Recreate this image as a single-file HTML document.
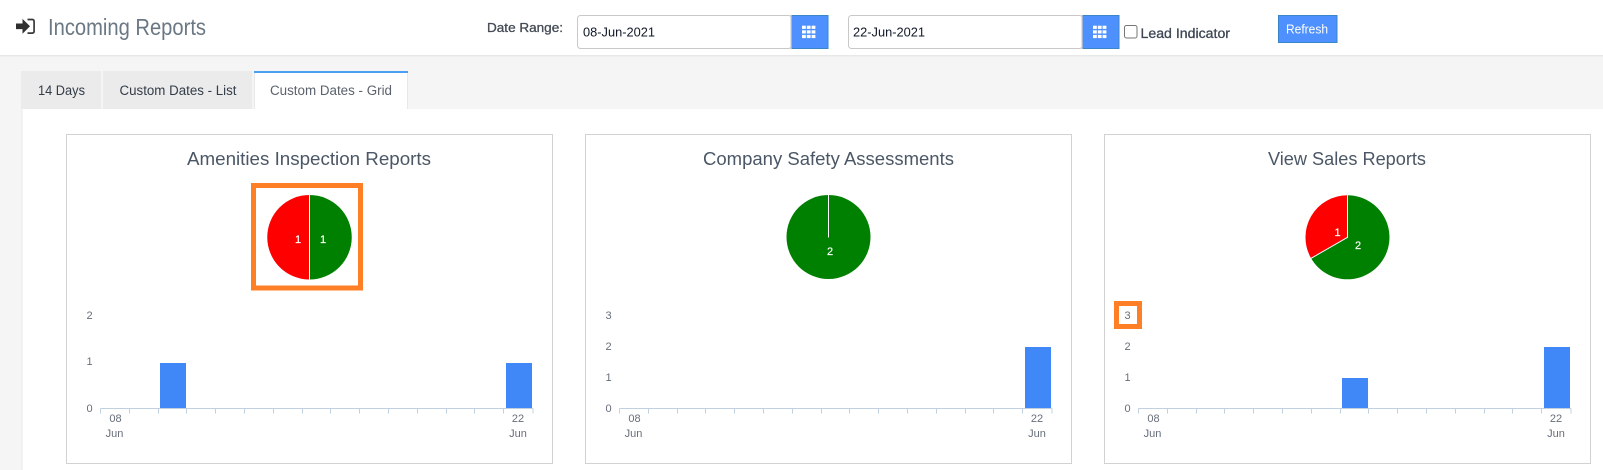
<!DOCTYPE html>
<html><head><meta charset="utf-8"><style>
html,body{margin:0;padding:0;background:#fff;width:1603px;height:470px;overflow:hidden}
svg{display:block}
text{font-family:"Liberation Sans",sans-serif}
</style></head><body>
<svg width="1603" height="470" viewBox="0 0 1603 470" xmlns="http://www.w3.org/2000/svg">
<defs>
<g id="axis" fill="none" stroke="#c0d0e0">
<path d="M100.5 408.5H533M100.5 408.5v5M129.5 408.5v5M158.5 408.5v5M186.5 408.5v5M215.5 408.5v5M244.5 408.5v5M273.5 408.5v5M302.5 408.5v5M330.5 408.5v5M359.5 408.5v5M388.5 408.5v5M417.5 408.5v5M446.5 408.5v5M474.5 408.5v5M503.5 408.5v5M533 408.5v5"/>
</g>
<g id="card"><rect x="66.5" y="134.5" width="486" height="329" fill="#fff" stroke="#d2d2d2"/></g>
<g id="grid" fill="#fff"><rect x="0" y="0" width="3.8" height="3.2"/><rect x="4.8" y="0" width="3.8" height="3.2"/><rect x="9.6" y="0" width="3.8" height="3.2"/><rect x="0" y="4.6" width="3.8" height="3.2"/><rect x="4.8" y="4.6" width="3.8" height="3.2"/><rect x="9.6" y="4.6" width="3.8" height="3.2"/><rect x="0" y="9.2" width="3.8" height="3.2"/><rect x="4.8" y="9.2" width="3.8" height="3.2"/><rect x="9.6" y="9.2" width="3.8" height="3.2"/></g>
</defs>

<!-- header -->
<rect width="1603" height="55" fill="#fff"/>
<rect y="55" width="1603" height="54" fill="#f5f5f5"/>
<rect y="55" width="1603" height="1.5" fill="#e8e8e8"/>
<rect y="109" width="22" height="361" fill="#f5f5f5"/>
<rect x="21.5" y="109" width="1" height="361" fill="#e8e8e8"/>

<path d="M16 23.5h6.5v-4.6l7.5 7.4-7.5 7.4v-4.6H16z" fill="#2f2f2f"/>
<path d="M27.5 19.5h4.6q2 0 2 2v9.6q0 2-2 2h-4.6" fill="none" stroke="#3a3a3a" stroke-width="1.7"/>
<text x="48" y="35" font-size="23" fill="#6a7884" textLength="158" lengthAdjust="spacingAndGlyphs">Incoming Reports</text>

<text x="487" y="32" font-size="12.5" fill="#444b55" stroke="#444b55" stroke-width="0.3" textLength="76" lengthAdjust="spacingAndGlyphs">Date Range:</text>
<rect x="577.5" y="15.5" width="214" height="33" rx="3" fill="#fff" stroke="#c8c8c8"/>
<text x="583" y="36.5" font-size="13.3" fill="#111827" textLength="72" lengthAdjust="spacingAndGlyphs">08-Jun-2021</text>
<rect x="791" y="15" width="37.5" height="34" fill="#4d90fe"/>
<path d="M791 15.5h37v33h-37" fill="none" stroke="#3a86c8"/>
<rect x="790.5" y="15" width="1.2" height="34" fill="#c4c4c4"/>
<use href="#grid" x="802" y="25.7"/>

<rect x="848.5" y="15.5" width="234" height="33" rx="3" fill="#fff" stroke="#c8c8c8"/>
<text x="853" y="36.5" font-size="13.3" fill="#111827" textLength="72" lengthAdjust="spacingAndGlyphs">22-Jun-2021</text>
<rect x="1082" y="15" width="37.5" height="34" fill="#4d90fe"/>
<path d="M1082 15.5h37v33h-37" fill="none" stroke="#3a86c8"/>
<rect x="1081.5" y="15" width="1.2" height="34" fill="#c4c4c4"/>
<use href="#grid" x="1093" y="25.7"/>

<rect x="1124.5" y="25.5" width="12.5" height="12.5" rx="2" fill="#fff" stroke="#767676"/>
<text x="1140.5" y="38" font-size="13.5" fill="#3d4654" stroke="#3d4654" stroke-width="0.3" textLength="89.5" lengthAdjust="spacingAndGlyphs">Lead Indicator</text>

<rect x="1278.5" y="15.5" width="58.5" height="27" fill="#4d90fe" stroke="#3a86c8"/>
<text x="1286" y="33.5" font-size="12.5" fill="#fff" textLength="42" lengthAdjust="spacingAndGlyphs">Refresh</text>

<!-- tabs -->
<rect x="21" y="71" width="80" height="38" fill="#ebebeb"/>
<rect x="103" y="71" width="149" height="38" fill="#ebebeb"/>
<rect x="254" y="71" width="154" height="39" fill="#fff"/>
<rect x="254" y="71" width="154" height="2" fill="#4a9ff0"/>
<rect x="254" y="73" width="1" height="36" fill="#e8e8e8"/>
<rect x="407" y="73" width="1" height="36" fill="#e8e8e8"/>
<text x="38" y="95" font-size="13.5" fill="#333c48" textLength="47" lengthAdjust="spacingAndGlyphs">14 Days</text>
<text x="119.5" y="95" font-size="13.5" fill="#333c48" textLength="117" lengthAdjust="spacingAndGlyphs">Custom Dates - List</text>
<text x="270" y="95" font-size="13.5" fill="#5b626d" textLength="122" lengthAdjust="spacingAndGlyphs">Custom Dates - Grid</text>

<!-- card 1 -->
<use href="#card"/>
<text x="187" y="165" font-size="18" fill="#4b5766" textLength="244" lengthAdjust="spacingAndGlyphs">Amenities Inspection Reports</text>
<rect x="253.5" y="185.5" width="107" height="102.5" fill="#fff" stroke="#ff7f27" stroke-width="5"/>
<path d="M309.5 195a42 42 0 0 0 0 84.5z" fill="#f00"/>
<path d="M309.5 195a42 42 0 0 1 0 84.5z" fill="#008000"/>
<rect x="309" y="195" width="1" height="84.5" fill="#fff"/>
<text x="298" y="243" font-size="11" fill="#fff" stroke="#fff" stroke-width="0.2" text-anchor="middle">1</text>
<text x="323" y="243" font-size="11" fill="#fff" stroke="#fff" stroke-width="0.2" text-anchor="middle">1</text>
<g font-size="11" fill="#666e7a" text-anchor="middle">
<text x="89.5" y="319">2</text><text x="89.5" y="365">1</text><text x="89.5" y="412">0</text>
<text x="115.5" y="422">08</text><text x="114.5" y="437">Jun</text>
<text x="518" y="422">22</text><text x="518" y="437">Jun</text>
</g>
<rect x="160" y="363" width="26" height="45" fill="#4088f8"/>
<rect x="506" y="363" width="26" height="45" fill="#4088f8"/>
<use href="#axis"/>

<!-- card 2 -->
<use href="#card" x="519"/>
<text x="703" y="165" font-size="18" fill="#4b5766" textLength="251" lengthAdjust="spacingAndGlyphs">Company Safety Assessments</text>
<circle cx="828.5" cy="237" r="42" fill="#008000"/>
<rect x="828" y="195" width="1" height="42.5" fill="#fff"/>
<text x="830" y="255" font-size="11" fill="#fff" stroke="#fff" stroke-width="0.2" text-anchor="middle">2</text>
<g font-size="11" fill="#666e7a" text-anchor="middle">
<text x="608.5" y="319">3</text><text x="608.5" y="350">2</text><text x="608.5" y="381">1</text><text x="608.5" y="412">0</text>
<text x="634.5" y="422">08</text><text x="633.5" y="437">Jun</text>
<text x="1037" y="422">22</text><text x="1037" y="437">Jun</text>
</g>
<rect x="1025" y="347" width="26" height="61" fill="#4088f8"/>
<use href="#axis" x="519"/>

<!-- card 3 -->
<use href="#card" x="1038"/>
<text x="1268" y="165" font-size="18" fill="#4b5766" textLength="158" lengthAdjust="spacingAndGlyphs">View Sales Reports</text>
<path d="M1347.5 237.3L1347.5 195.3a42 42 0 1 1 -36.4 63z" fill="#008000"/>
<path d="M1347.5 237.3L1311.1 258.3a42 42 0 0 1 36.4-63z" fill="#f00"/>
<path d="M1347.5 195.3V237.3L1311.1 258.3" fill="none" stroke="#fff" stroke-width="1"/>
<text x="1337.5" y="236" font-size="11" fill="#fff" stroke="#fff" stroke-width="0.2" text-anchor="middle">1</text>
<text x="1358" y="249" font-size="11" fill="#fff" stroke="#fff" stroke-width="0.2" text-anchor="middle">2</text>
<rect x="1116.5" y="303.5" width="23" height="23" fill="#fff" stroke="#ff7f27" stroke-width="5"/>
<g font-size="11" fill="#666e7a" text-anchor="middle">
<text x="1127.5" y="319">3</text><text x="1127.5" y="350">2</text><text x="1127.5" y="381">1</text><text x="1127.5" y="412">0</text>
<text x="1153.5" y="422">08</text><text x="1152.5" y="437">Jun</text>
<text x="1556" y="422">22</text><text x="1556" y="437">Jun</text>
</g>
<rect x="1342" y="378" width="26" height="30" fill="#4088f8"/>
<rect x="1544" y="347" width="26" height="61" fill="#4088f8"/>
<use href="#axis" x="1038"/>
</svg>
</body></html>
